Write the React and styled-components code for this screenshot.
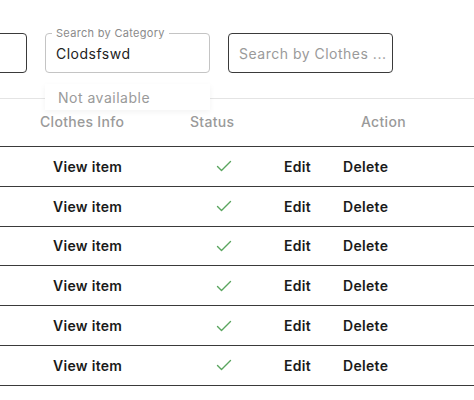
import React from 'react';
import styled, { createGlobalStyle } from 'styled-components';

const GlobalStyle = createGlobalStyle`
  html, body {
    margin: 0;
    padding: 0;
    background: #fff;
    font-family: "Inter", "Liberation Sans", sans-serif;
    overflow: hidden;
  }
`;

const Page = styled.div`
  padding-top: 33px;
  width: 474px;
  overflow: hidden;
`;

const FilterBar = styled.div`
  display: flex;
  gap: 18px;
  margin-left: -138px;
`;

const Field = styled.div`
  position: relative;
  width: 165px;
  height: 40px;
  box-sizing: border-box;
  border: 1px solid ${(p) => (p.$light ? '#c4c4c4' : '#3a3a3a')};
  border-radius: 4px;
  display: flex;
  align-items: center;
  padding: 0 10px;
  font-size: 14px;
  color: ${(p) => (p.$placeholder ? '#9a9a9a' : '#222')};
  font-weight: 400;
  letter-spacing: 0.5px;
  white-space: nowrap;
`;

const Legend = styled.span`
  position: absolute;
  top: -7px;
  left: 6px;
  padding: 0 4px;
  background: #fff;
  font-size: 11px;
  line-height: 13px;
  color: #8a8a8a;
  font-weight: 400;
  letter-spacing: 0.3px;
`;

const Popup = styled.div`
  position: absolute;
  top: 50px;
  left: -1px;
  width: 165px;
  height: 26px;
  box-sizing: border-box;
  background: #fff;
  box-shadow: 0 2px 6px rgba(0, 0, 0, 0.05);
  display: flex;
  align-items: center;
  padding-left: 13px;
  font-size: 14px;
  font-weight: 400;
  color: #9a9a9a;
  letter-spacing: 0.5px;
  z-index: 2;
`;

const Table = styled.div`
  margin-top: 25px;
  border-top: 1px solid #e4e4e4;
`;

const HeadRow = styled.div`
  display: flex;
  align-items: center;
  height: 48px;
  padding-bottom: 2px;
  box-sizing: border-box;
  border-bottom: 1.5px solid #3a3a3a;
`;

const Row = styled.div`
  display: flex;
  align-items: center;
  height: 39.8px;
  box-sizing: border-box;
  border-bottom: 1.5px solid #3a3a3a;
`;

const HeadCell = styled.div`
  width: ${(p) => p.$w}px;
  padding-left: ${(p) => p.$pl}px;
  box-sizing: border-box;
  font-size: 14px;
  font-weight: 500;
  color: #9a9a9a;
  letter-spacing: 0.3px;
  white-space: nowrap;
`;

const Cell = styled.div`
  width: ${(p) => p.$w}px;
  padding-left: ${(p) => p.$pl}px;
  box-sizing: border-box;
  display: flex;
  align-items: center;
  font-size: 14px;
  font-weight: 600;
  color: #1a1a1a;
  letter-spacing: 0.3px;
  white-space: nowrap;
`;

const Check = () => (
  <svg width="16" height="12" viewBox="0 0 16 12" fill="none">
    <polyline points="1.5,6.5 5.5,10.5 14.5,1.5" stroke="#5aa55f" strokeWidth="1.4" strokeLinecap="round" strokeLinejoin="round" />
  </svg>
);

const rows = [1, 2, 3, 4, 5, 6];

export default function App() {
  return (
    <>
      <GlobalStyle />
      <Page>
        <FilterBar>
          <Field />
          <Field $light>
            <Legend>Search by Category</Legend>
            Clodsfswd
            <Popup>Not available</Popup>
          </Field>
          <Field $placeholder>Search by Clothes ...</Field>
        </FilterBar>
        <Table>
          <HeadRow>
            <HeadCell $w={190} $pl={40}>Clothes Info</HeadCell>
            <HeadCell $w={171} $pl={0}>Status</HeadCell>
            <HeadCell $w={113} $pl={0}>Action</HeadCell>
          </HeadRow>
          {rows.map((r) => (
            <Row key={r}>
              <Cell $w={216} $pl={53}>View item</Cell>
              <Cell $w={68} $pl={0}><Check /></Cell>
              <Cell $w={59} $pl={0}>Edit</Cell>
              <Cell $w={131} $pl={0}>Delete</Cell>
            </Row>
          ))}
        </Table>
      </Page>
    </>
  );
}
